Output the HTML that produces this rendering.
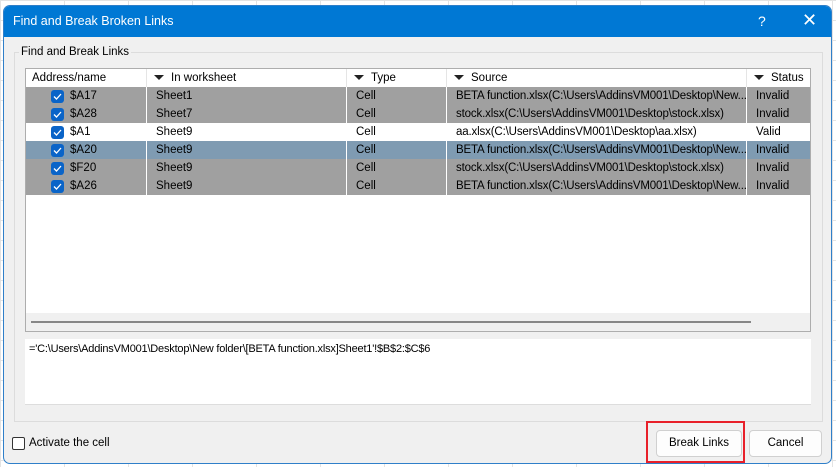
<!DOCTYPE html>
<html><head><style>
*{box-sizing:border-box;margin:0;padding:0}
body{width:836px;height:467px;overflow:hidden;font-family:"Liberation Sans",sans-serif;font-size:11.5px;color:#000;
background-color:#fff;background-image:linear-gradient(#e3e3e3 1px,transparent 1px),linear-gradient(90deg,#e3e3e3 1px,transparent 1px);background-size:64px 20px;position:relative}
.dlg{position:absolute;left:3px;top:5px;width:829px;height:459px;background:#f0f0f0;border:1px solid #2f7fc9;border-radius:7px;overflow:hidden}
.title{position:absolute;left:0;top:0;width:100%;height:31px;background:#0078d4;color:#fff;font-size:12.5px;padding:8px 0 0 9px}
.q{position:absolute;left:754px;top:7px;font-size:14px;color:#fff}
.x{position:absolute;left:798px;top:4px;font-size:18px;color:#fff}
.group{position:absolute;left:10px;top:46px;width:809px;height:370px;border:1px solid #dcdcdc}
.glabel{position:absolute;left:15px;top:40px;background:#f0f0f0;padding:0 2px}
.list{position:absolute;left:21px;top:62px;width:786px;height:264px;background:#fff;border:1px solid #adadad}
.row{position:absolute;left:0;height:18px;width:784px}
.c{position:absolute;top:0;height:18px;line-height:18px;white-space:nowrap;overflow:hidden}
.sep{border-left:1px solid #fff}
.hdr .c{border-left:1px solid #e5e5e5;height:18px;line-height:18px}
.tri{display:inline-block;width:0;height:0;border-left:5px solid transparent;border-right:5px solid transparent;border-top:5px solid #222;margin:0 7px 1px 7px;vertical-align:middle}
.cb{position:absolute;left:25px;top:3px;width:13px;height:13px;background:#0a64c8;border-radius:3px}
.cb svg{position:absolute;left:2px;top:3px}
.src{letter-spacing:-0.15px}
.scroll{position:absolute;left:0;top:244px;width:784px;height:18px;background:#f0f0f0}
.bar{position:absolute;left:5px;top:8px;width:720px;height:2px;background:#878787}
.formula{position:absolute;left:21px;top:333px;width:786px;height:66px;background:#fff;border-bottom:1px solid #ddd;padding:4px 4px;font-size:11px;letter-spacing:-0.2px}
.chk{position:absolute;left:8px;top:431px;width:13px;height:13px;border:1px solid #333;border-radius:2px;background:#fff}
.btn{position:absolute;top:424px;height:27px;background:#fdfdfd;border:1px solid #d0d0d0;border-radius:4px;text-align:center;line-height:25px}
.red{position:absolute;left:642px;top:415px;width:99px;height:42px;border:2px solid #e8202a}
</style></head><body>
<div class="dlg">
<div class="title">Find and Break Broken Links</div>
<div class="q">?</div><div class="x">✕</div>
<div class="group"></div>
<div class="glabel">Find and Break Links</div>
<div class="list">
 <div class="row hdr" style="top:0;width:784px">
  <div class="c" style="left:0;width:120px;border:none;padding-left:6px">Address/name</div>
  <div class="c" style="left:120px;width:200px"><span class="tri"></span>In worksheet</div>
  <div class="c" style="left:320px;width:100px"><span class="tri"></span>Type</div>
  <div class="c" style="left:420px;width:300px"><span class="tri"></span>Source</div>
  <div class="c" style="left:720px;width:64px"><span class="tri"></span>Status</div>
 </div>
 <div class="row" style="top:18px;background:#a0a0a0"><div class="cb"><svg width="9" height="7"><path d="M1 3.5L3.5 6L8 1" stroke="#fff" stroke-width="1.3" fill="none"/></svg></div><div class="c" style="left:44px">$A17</div><div class="c sep" style="left:120px;width:200px;padding-left:9px">Sheet1</div><div class="c sep" style="left:320px;width:100px;padding-left:9px">Cell</div><div class="c sep src" style="left:420px;width:300px;padding-left:9px">BETA function.xlsx(C:\Users\AddinsVM001\Desktop\New...</div><div class="c sep" style="left:720px;width:64px;padding-left:9px">Invalid</div></div>
 <div class="row" style="top:36px;background:#a0a0a0"><div class="cb"><svg width="9" height="7"><path d="M1 3.5L3.5 6L8 1" stroke="#fff" stroke-width="1.3" fill="none"/></svg></div><div class="c" style="left:44px">$A28</div><div class="c sep" style="left:120px;width:200px;padding-left:9px">Sheet7</div><div class="c sep" style="left:320px;width:100px;padding-left:9px">Cell</div><div class="c sep src" style="left:420px;width:300px;padding-left:9px">stock.xlsx(C:\Users\AddinsVM001\Desktop\stock.xlsx)</div><div class="c sep" style="left:720px;width:64px;padding-left:9px">Invalid</div></div>
 <div class="row" style="top:54px;background:#fff"><div class="cb"><svg width="9" height="7"><path d="M1 3.5L3.5 6L8 1" stroke="#fff" stroke-width="1.3" fill="none"/></svg></div><div class="c" style="left:44px">$A1</div><div class="c sep" style="left:120px;width:200px;padding-left:9px">Sheet9</div><div class="c sep" style="left:320px;width:100px;padding-left:9px">Cell</div><div class="c sep src" style="left:420px;width:300px;padding-left:9px">aa.xlsx(C:\Users\AddinsVM001\Desktop\aa.xlsx)</div><div class="c sep" style="left:720px;width:64px;padding-left:9px">Valid</div></div>
 <div class="row" style="top:72px;background:#7f9bb2"><div class="cb"><svg width="9" height="7"><path d="M1 3.5L3.5 6L8 1" stroke="#fff" stroke-width="1.3" fill="none"/></svg></div><div class="c" style="left:44px">$A20</div><div class="c sep" style="left:120px;width:200px;padding-left:9px">Sheet9</div><div class="c sep" style="left:320px;width:100px;padding-left:9px">Cell</div><div class="c sep src" style="left:420px;width:300px;padding-left:9px">BETA function.xlsx(C:\Users\AddinsVM001\Desktop\New...</div><div class="c sep" style="left:720px;width:64px;padding-left:9px">Invalid</div></div>
 <div class="row" style="top:90px;background:#a0a0a0"><div class="cb"><svg width="9" height="7"><path d="M1 3.5L3.5 6L8 1" stroke="#fff" stroke-width="1.3" fill="none"/></svg></div><div class="c" style="left:44px">$F20</div><div class="c sep" style="left:120px;width:200px;padding-left:9px">Sheet9</div><div class="c sep" style="left:320px;width:100px;padding-left:9px">Cell</div><div class="c sep src" style="left:420px;width:300px;padding-left:9px">stock.xlsx(C:\Users\AddinsVM001\Desktop\stock.xlsx)</div><div class="c sep" style="left:720px;width:64px;padding-left:9px">Invalid</div></div>
 <div class="row" style="top:108px;background:#a0a0a0"><div class="cb"><svg width="9" height="7"><path d="M1 3.5L3.5 6L8 1" stroke="#fff" stroke-width="1.3" fill="none"/></svg></div><div class="c" style="left:44px">$A26</div><div class="c sep" style="left:120px;width:200px;padding-left:9px">Sheet9</div><div class="c sep" style="left:320px;width:100px;padding-left:9px">Cell</div><div class="c sep src" style="left:420px;width:300px;padding-left:9px">BETA function.xlsx(C:\Users\AddinsVM001\Desktop\New...</div><div class="c sep" style="left:720px;width:64px;padding-left:9px">Invalid</div></div>
 <div class="scroll"><div class="bar"></div></div>
</div>
<div class="formula">='C:\Users\AddinsVM001\Desktop\New folder\[BETA function.xlsx]Sheet1'!$B$2:$C$6</div>
<div class="chk"></div>
<div style="position:absolute;left:25px;top:431px">Activate the cell</div>
<div class="red"></div>
<div class="btn" style="left:652px;width:86px">Break Links</div>
<div class="btn" style="left:745px;width:73px">Cancel</div>
</div>
</body></html>
